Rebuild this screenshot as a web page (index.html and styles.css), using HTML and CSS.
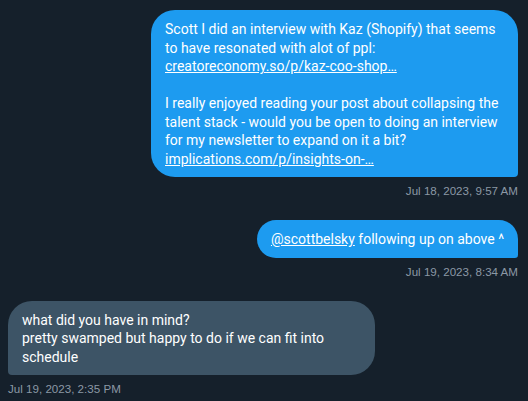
FILE: index.html
```html
<!DOCTYPE html>
<html>
<head>
<meta charset="utf-8">
<link rel="stylesheet" href="styles.css">
</head>
<body>
<div class="thread">
  <div class="msg sent">
    <div class="bubble">
      <p>Scott I did an interview with Kaz (Shopify) that seems to have resonated with alot of ppl:<br><a href="#">creatoreconomy.so/p/kaz-coo-shop…</a></p>
      <p class="gap">I really enjoyed reading your post about collapsing the talent stack - would you be open to doing an interview for my newsletter to expand on it a bit?<br><a href="#">implications.com/p/insights-on-…</a></p>
    </div>
    <div class="time">Jul 18, 2023, 9:57 AM</div>
  </div>
  <div class="msg sent">
    <div class="bubble short">
      <p><a href="#">@scottbelsky</a> following up on above ^</p>
    </div>
    <div class="time">Jul 19, 2023, 8:34 AM</div>
  </div>
  <div class="msg received">
    <div class="bubble">
      <p>what did you have in mind?<br>pretty swamped but happy to do if we can fit into schedule</p>
    </div>
    <div class="time">Jul 19, 2023, 2:35 PM</div>
  </div>
</div>
</body>
</html>
```
FILE: styles.css
```css
html, body {
  margin: 0;
  padding: 0;
  background: #15202b;
}
.thread {
  display: flex;
  flex-direction: column;
  gap: 21px;
  padding: 10px 10px 0 8px;
}
.msg {
  display: flex;
  flex-direction: column;
  gap: 6px;
}
.msg.sent { align-items: flex-end; }
.msg.received { align-items: flex-start; }
.bubble {
  box-sizing: border-box;
  max-width: 367px;
  padding: 10px 14px 9px 14px;
  border-radius: 24px;
  font-family: Roboto, "Noto Sans", sans-serif;
  font-size: 14px;
  line-height: 18.5px;
  color: #ffffff;
}
.bubble p { margin: 0; }
.bubble p.gap { margin-top: 18.5px; }
.bubble a { color: #ffffff; text-decoration: underline; }
.sent .bubble {
  background: #1d9bf0;
  border-bottom-right-radius: 4px;
}
.received .bubble {
  background: #3d5466;
  border-bottom-left-radius: 4px;
  width: 367px;
}
.time {
  font-family: "Liberation Sans", Arial, sans-serif;
  font-size: 11.6px;
  line-height: 16px;
  color: #8b98a5;
}
```
